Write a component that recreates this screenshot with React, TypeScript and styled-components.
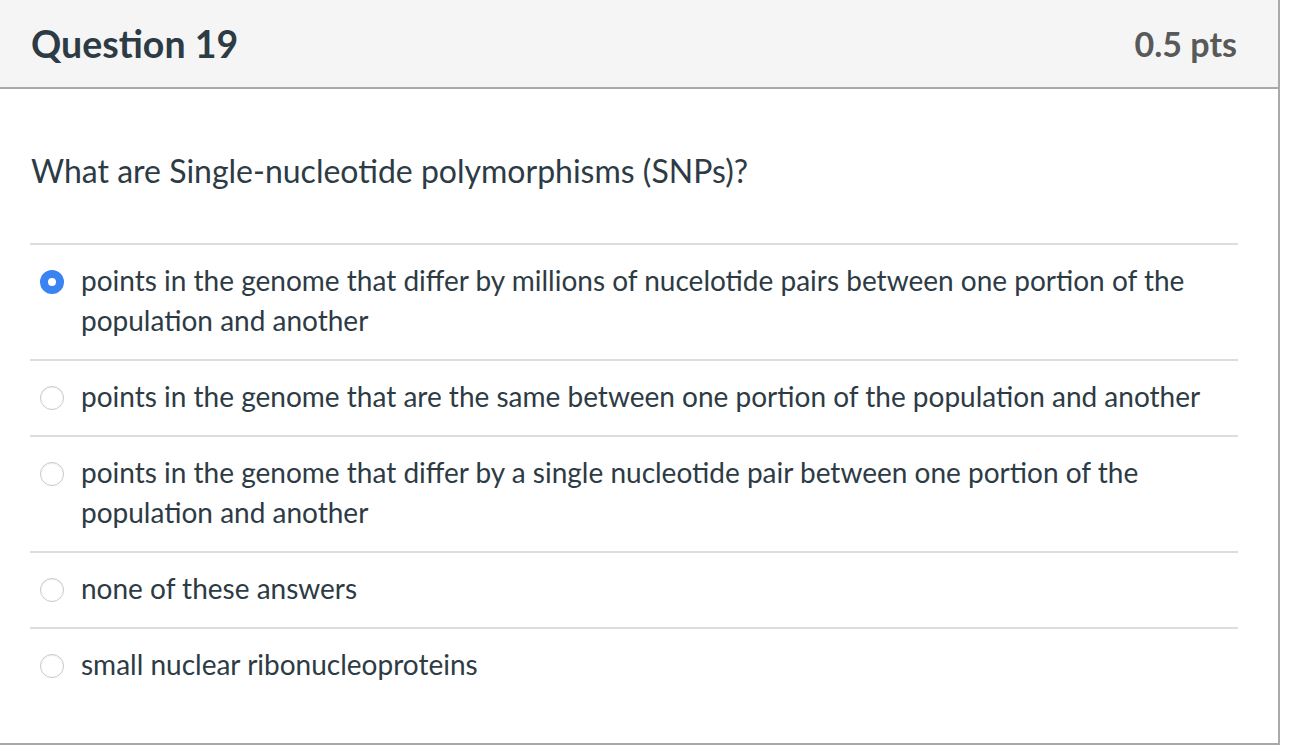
import React from 'react';
import styled, { createGlobalStyle } from 'styled-components';

const GlobalStyle = createGlobalStyle`
  html, body {
    margin: 0;
    padding: 0;
    background: #ffffff;
  }
  body {
    font-family: Lato, "Liberation Sans", sans-serif;
    color: #2d3b45;
  }
`;

const Card = styled.div`
  width: 1280px;
  box-sizing: border-box;
  border-right: 2px solid #aaaaaa;
  border-bottom: 2px solid #aaaaaa;
  background: #ffffff;
`;

const Header = styled.div`
  height: 89px;
  box-sizing: border-box;
  display: flex;
  align-items: center;
  justify-content: space-between;
  padding: 0 41px 0 31px;
  background: #f5f5f5;
  border-bottom: 2px solid #aaaaaa;
`;

const Title = styled.h2`
  margin: 0;
  font-size: 37.5px;
  font-weight: 700;
  color: #2d3b45;
`;

const Points = styled.span`
  font-size: 34px;
  font-weight: 700;
  color: #595959;
`;

const Body = styled.div`
  padding: 60px 40px 40px 30px;
`;

const QuestionText = styled.p`
  margin: 0 0 50px 1px;
  font-size: 32px;
  line-height: 44px;
  color: #2d3b45;
`;

const AnswerList = styled.div`
  display: flex;
  flex-direction: column;
`;

const AnswerRow = styled.label`
  display: flex;
  align-items: flex-start;
  gap: 17px;
  padding: 15px 0 19px 10px;
  border-top: 2px solid #dddddd;
  cursor: pointer;
`;

const Radio = styled.span<{ $checked: boolean }>`
  flex: none;
  width: 24px;
  height: 24px;
  margin-top: 10px;
  box-sizing: border-box;
  border-radius: 50%;
  background: #ffffff;
  border: ${(props) => (props.$checked ? '8px solid #3a83f3' : '1px solid #c8c8c8')};
  box-shadow: ${(props) => (props.$checked ? 'none' : 'inset 0 1px 1px rgba(0,0,0,0.06)')};
`;

const AnswerText = styled.span`
  font-size: 28px;
  line-height: 40px;
  color: #2d3b45;
`;

const answers = [
  { text: 'points in the genome that differ by millions of nucelotide pairs between one portion of the population and another', checked: true },
  { text: 'points in the genome that are the same between one portion of the population and another', checked: false },
  { text: 'points in the genome that differ by a single nucleotide pair between one portion of the population and another', checked: false },
  { text: 'none of these answers', checked: false },
  { text: 'small nuclear ribonucleoproteins', checked: false },
];

const App = (): React.ReactElement => {
  return (
    <>
      <GlobalStyle />
      <Card>
        <Header>
          <Title>Question 19</Title>
          <Points>0.5 pts</Points>
        </Header>
        <Body>
          <QuestionText>What are Single-nucleotide polymorphisms (SNPs)?</QuestionText>
          <AnswerList>
            {answers.map((answer) => (
              <AnswerRow key={answer.text}>
                <Radio $checked={answer.checked} />
                <AnswerText>{answer.text}</AnswerText>
              </AnswerRow>
            ))}
          </AnswerList>
        </Body>
      </Card>
    </>
  );
};

export default App;
